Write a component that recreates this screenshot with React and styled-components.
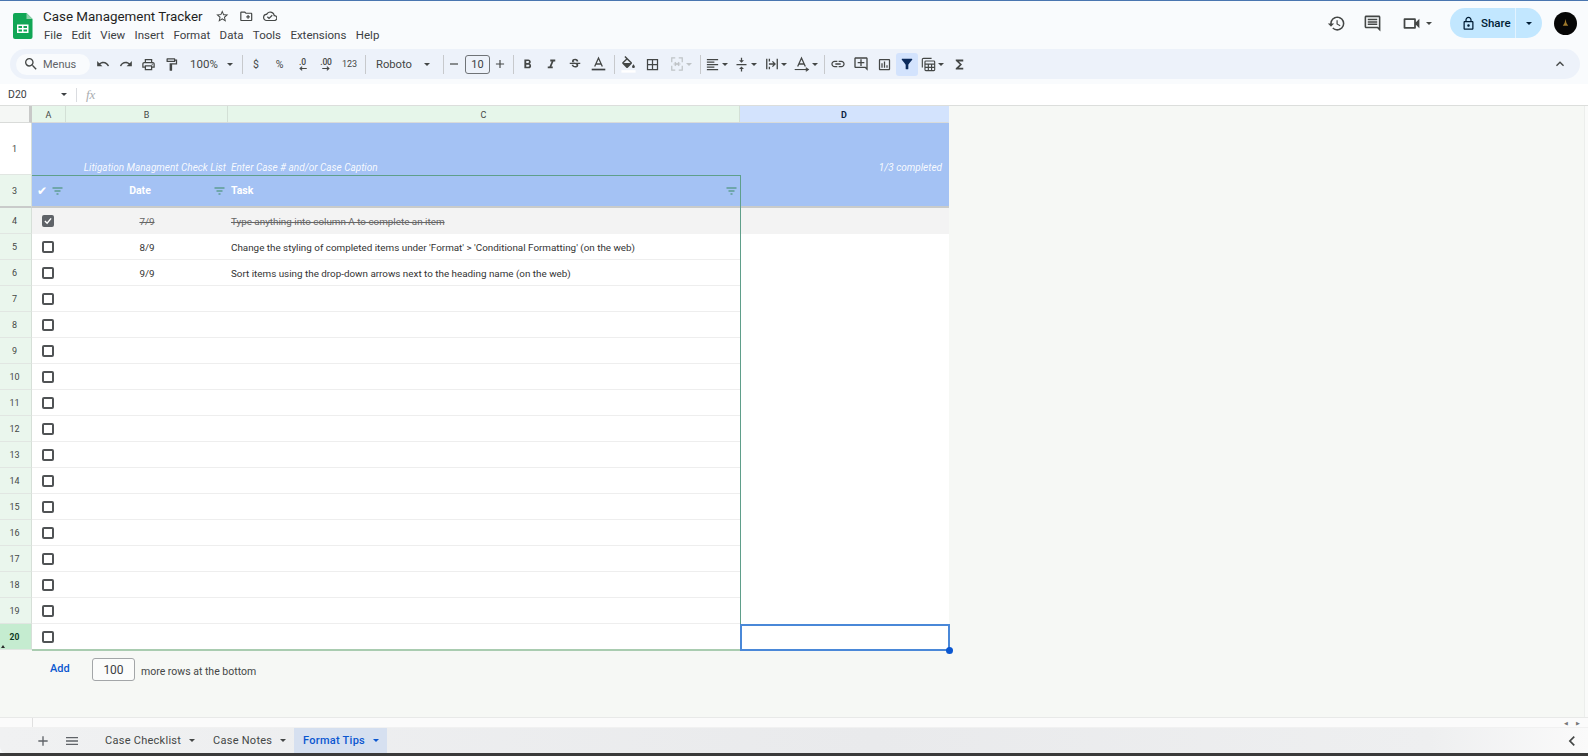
import React from "react";
import styled, { createGlobalStyle } from "styled-components";
import {
  MdSearch, MdUndo, MdRedo, MdOutlinePrint, MdOutlineFormatPaint, MdFormatBold, MdFormatItalic,
  MdStrikethroughS, MdBorderAll, MdFormatAlignLeft, MdVerticalAlignCenter,
  MdLink, MdOutlineAddComment, MdOutlineInsertChart, MdFilterAlt, MdFunctions, MdExpandLess,
  MdAdd, MdMenu, MdChevronLeft, MdOutlineStarBorder, MdOutlineCreateNewFolder, MdOutlineCloudDone,
  MdHistory, MdOutlineComment, MdOutlineVideocam, MdOutlineLock,
} from "react-icons/md";

const Global = createGlobalStyle`
  html, body { margin: 0; padding: 0; height: 100%; overflow: hidden; background: #f9fbfd; }
  body { font-family: Roboto, "Liberation Sans", sans-serif; color: #1f1f1f; }
  * { box-sizing: border-box; }
`;

const Page = styled.div`
  width: 1588px; height: 756px; display: flex; flex-direction: column; background: #f9fbfd;
  border-top: 1px solid #4a76b0;
`;
const TitleBar = styled.header`
  height: 48px; display: flex; align-items: flex-start; padding: 12px 11px 0 13px; flex: none;
`;
const LogoWrap = styled.div`width: 20px; height: 26px; flex: none; margin-right: 10px;`;
const DocInfo = styled.div`display: flex; flex-direction: column; margin-top: -6px;`;
const TitleRow = styled.div`display: flex; align-items: center; height: 19px;`;
const DocTitle = styled.div`font-size: 13.4px; line-height: 19px; color: #1f1f1f; width: 167px; white-space: nowrap;`;
const TitleIcon = styled.span`
  width: 24px; display: flex; justify-content: center; color: #444746; font-size: 14.5px;
`;
const MenuRow = styled.nav`display: flex; gap: 9.4px; margin-top: 1px; height: 16px; align-items: center; padding-left: 1px;`;
const MenuItem = styled.span`font-size: 11.5px; color: #3c4043;`;
const Actions = styled.div`margin-left: auto; display: flex; align-items: center; height: 30px; margin-top: -5px;`;
const ActionBtn = styled.span`
  width: ${(p) => p.$w}px; display: flex; align-items: center; justify-content: center; color: #444746; font-size: 19px; gap: 4px;
`;
const SharePill = styled.div`
  width: 92px; height: 30px; border-radius: 15px; background: #c2e7ff; display: flex; margin: 0 12px 0 8px; overflow: hidden;
`;
const ShareMain = styled.div`
  width: 66px; display: flex; align-items: center; gap: 5px; padding-left: 11px; font-size: 11.5px; font-weight: 500; color: #001d35;
  border-right: 1px solid #e3f3ff;
  svg { font-size: 15px; }
`;
const ShareCaret = styled.div`flex: 1; display: flex; align-items: center; justify-content: center; color: #001d35;`;
const Avatar = styled.div`width: 23px; height: 23px; border-radius: 50%; background: #060606; display: flex; align-items: center; justify-content: center;`;

const ToolbarWrap = styled.div`height: 35px; padding: 0 8px 5px 10px; flex: none;`;
const Toolbar = styled.div`
  height: 30px; border-radius: 15px; background: #edf2fa; display: flex; align-items: center; padding-left: 6px;
`;
const SearchPill = styled.div`
  width: 74px; height: 21px; border-radius: 11px; background: #f9fbfd; display: flex; align-items: center; gap: 4px; padding-left: 7px;
  font-size: 11px; color: #5f6368; margin-right: 1px; flex: none;
  svg { font-size: 16px; color: #444746; }
`;
const Slot = styled.div`
  width: ${(p) => p.$w}px; flex: none; height: 23px; display: flex; align-items: center; justify-content: center;
  color: ${(p) => (p.$muted ? "#bfc3c6" : p.$active ? "#0b2a5b" : "#444746")}; font-size: ${(p) => p.$size || 15}px;
  background: ${(p) => (p.$active ? "#d3e3fd" : "transparent")}; border-radius: 3px;
`;
const TextSlot = styled(Slot)`
  font-size: ${(p) => p.$size || 10}px; font-weight: ${(p) => p.$weight || 400}; justify-content: ${(p) => (p.$start ? "space-between" : "center")};
  padding: ${(p) => (p.$start ? "0 7px 0 7px" : "0")};
`;
const Sep = styled.div`
  width: ${(p) => p.$w || 6}px; flex: none; height: 19px; position: relative;
  &::after { content: ""; position: absolute; left: 50%; top: 0; bottom: 0; width: 1px; background: #c7c9cc; }
`;
const Caret = styled.i`
  display: inline-block; width: 0; height: 0; flex: none;
  border-left: 3px solid transparent; border-right: 3px solid transparent;
  border-top: 3.5px solid ${(p) => p.$color || "currentColor"};
`;
const CaretGap = styled.span`display: inline-flex; margin-left: 2px;`;
const SizeInput = styled.div`
  width: 25px; height: 19px; border: 1px solid #6f7377; border-radius: 3px; margin: 0 0 0 5px; flex: none;
  display: flex; align-items: center; justify-content: center; font-size: 11px; color: #3c4043;
`;
const DecText = styled.span`
  font-size: 8.5px; color: #444746; line-height: 8px; font-weight: 500; letter-spacing: -0.2px;
`;
const DecIcon = styled.span`display: flex; flex-direction: column; align-items: center; gap: 0; margin-top: 1px;`;
const CollapseBtn = styled.div`margin-left: auto; margin-right: 12px; display: flex; color: #444746; font-size: 16px;`;

const FormulaBar = styled.div`
  height: 22px; background: #fff; display: flex; align-items: center; border-bottom: 1px solid #dcdedc; flex: none; position: relative;
`;
const NameBox = styled.div`
  width: 76px; display: flex; align-items: center; justify-content: space-between; padding: 0 9px 0 8px; font-size: 10.5px; color: #3c4043;
`;
const FormulaSep = styled.div`width: 1px; height: 14px; background: #dadce0;`;
const Fx = styled.span`font-family: "Liberation Serif", serif; font-style: italic; font-size: 13px; color: #a9adb0; margin-left: 9px;`;

const SheetArea = styled.div`flex: 1; background: #f6f8f5; min-height: 0; position: relative;`;
const Grid = styled.div`
  width: 949px; position: relative; display: grid;
  grid-template-columns: 32px 34px 162px 512px 209px;
  grid-template-rows: 17px 52px 33px repeat(17, 26px);
`;
const Corner = styled.div`background: #f5f7f5; border-right: 3px solid #c8c9c8; border-bottom: 1px solid #d9dbd9;`;
const ColHead = styled.div`
  display: flex; align-items: center; justify-content: center; font-size: 9px; padding-top: 1px;
  background: ${(p) => (p.$selected ? "#d3e3fd" : "#e6f6ea")};
  color: ${(p) => (p.$selected ? "#0b1f45" : "#444746")}; font-weight: ${(p) => (p.$selected ? 700 : 400)};
  border-right: 1px solid ${(p) => (p.$selected ? "#d3e3fd" : "#d3e0d6")}; border-bottom: 1px solid #d9dbd9;
`;
const RowHead = styled.div`
  display: flex; align-items: center; justify-content: center; font-size: ${(p) => (p.$current ? 8.5 : 9)}px; padding-right: 2px; position: relative;
  background: ${(p) => (p.$current ? "#c5ecd0" : p.$white ? "#ffffff" : "#eaf6ed")};
  color: ${(p) => (p.$current ? "#0d3b23" : "#444746")}; font-weight: ${(p) => (p.$current ? 700 : 400)};
  border-right: 1px solid #d6dfd8; border-bottom: ${(p) => (p.$thick ? "2px solid #c9cbca" : "1px solid #e1e6e2")};
`;
const HiddenMark = styled.i`
  position: absolute; left: 1px; bottom: 1px; width: 0; height: 0;
  border-left: 2.5px solid transparent; border-right: 2.5px solid transparent; border-bottom: 3px solid #2c2c2c;
`;
const BannerCell = styled.div`
  background: #a4c2f4; color: rgba(255,255,255,.92); font-style: italic; font-size: 10px; display: flex; align-items: flex-end;
  padding: 0 ${(p) => (p.$endPad ?? 3)}px 2px 3px; white-space: nowrap;
  justify-content: ${(p) => (p.$right ? "flex-end" : "flex-start")};
  span { flex: none; }
`;
const HeadCell = styled.div`
  background: #a4c2f4; color: #fff; font-weight: 700; font-size: 10.5px; display: flex; align-items: center; position: relative;
  border-bottom: 2px solid #c9cbca; padding: 0 3px;
  justify-content: ${(p) => p.$justify || "flex-start"};
`;
const CheckGlyph = styled.span`font-size: 12px; position: relative; left: 2px; font-family: "DejaVu Sans", sans-serif;`;
const FilterMark = styled.span`
  position: absolute; right: ${(p) => p.$right}px; top: 50%; margin-top: -5px; display: flex;
`;
const HeadLabel = styled.span`position: relative; left: ${(p) => p.$left || 0}px;`;
const Cell = styled.div`
  background: ${(p) => (p.$done ? "#f3f3f3" : "#fff")};
  border-bottom: 1px solid ${(p) => (p.$done ? "#f3f3f3" : p.$plain ? "#fff" : "#eeeeee")};
  display: flex; align-items: center; font-size: 9.85px; color: ${(p) => (p.$done ? "#666" : "#333")};
  padding: 1px 3px 0; white-space: nowrap; overflow: hidden;
  justify-content: ${(p) => (p.$center ? "center" : "flex-start")};
  text-decoration: ${(p) => (p.$done ? "line-through" : "none")};
`;
const CheckCell = styled(Cell)`text-decoration: none;`;
const Check = styled.span`
  width: 12px; height: 12px; border-radius: 2px; border: 2px solid ${(p) => (p.$on ? "#5f6368" : "#505355")};
  background: ${(p) => (p.$on ? "#5f6368" : "#fff")}; display: flex; align-items: center; justify-content: center; margin-left: 7px;
`;
const FilterFrame = styled.div`
  position: absolute; left: 32px; top: 69px; width: 709px; height: 476px; pointer-events: none;
  border: 1px solid #5f9f8a; border-left: none; border-bottom: 2px solid #a9ccb0;
`;
const ActiveCell = styled.div`
  position: absolute; left: 740px; top: 518px; width: 210px; height: 27px; border: 2px solid #4a88d8; pointer-events: none;
`;
const Handle = styled.i`
  position: absolute; right: -5px; bottom: -5px; width: 7px; height: 7px; border-radius: 50%; background: #0b57d0;
`;
const AddRows = styled.div`display: flex; align-items: center; height: 23px; margin-top: 8px; padding-left: 50px;`;
const AddLink = styled.span`font-size: 11px; font-weight: 500; color: #0b57d0; width: 42px; position: relative; top: -1px;`;
const AddInput = styled.div`
  width: 43px; height: 23px; border: 1px solid #a3a6a8; border-radius: 3px; background: #fbfcfb;
  display: flex; align-items: center; justify-content: center; font-size: 12px; color: #3c4043; margin-right: 6px;
`;
const AddText = styled.span`font-size: 10.5px; color: #444746; position: relative; top: 1.500px;`;
const VScroll = styled.div`
  position: absolute; right: 0; top: 0; bottom: 0; width: 4px; background: #fafbfa; border-left: 1px solid #eceeec;
`;

const ScrollStrip = styled.div`
  height: 10px; flex: none; background: #fbfbfb; border-top: 1px solid #e8e9e8; display: flex; align-items: center; padding-left: 32px;
`;
const StripTick = styled.i`width: 1px; height: 9px; background: #e0e0e0;`;
const StripArrows = styled.span`margin-left: auto; display: flex; gap: 8px; padding-right: 8px; color: #777; font-size: 5px;`;
const TabBar = styled.div`
  height: 26px; flex: none; background: linear-gradient(90deg, #f0f1f2 0%, #e9eaec 55%, #eeeff0 90%, #fafafa 100%);
  border-top: 1px solid #f1f1f1; border-radius: 0 0 6px 6px; display: flex; align-items: center; padding-left: 34px; color: #444746;
`;
const TabIcon = styled.span`width: ${(p) => p.$w}px; display: flex; justify-content: center; font-size: 16px; color: #5f6368;`;
const Tab = styled.div`
  height: 26px; display: flex; align-items: center; flex: none; gap: 8px; width: ${(p) => p.$w}px;
  padding-left: ${(p) => p.$pad}px; font-size: 11px; letter-spacing: 0.27px;
  font-weight: ${(p) => (p.$active ? 500 : 400)}; color: ${(p) => (p.$active ? "#0b57d0" : "#444746")};
  background: ${(p) => (p.$active ? "#d6e0f0" : "transparent")};
`;
const EndBtn = styled.span`margin-left: auto; padding-right: 6px; display: flex; font-size: 20px; color: #444746;`;
const Desk = styled.div`height: 3px; flex: none; background: #3a3a3a;`;

const Logo = () => (
  <svg width="20" height="26" viewBox="0 0 20 26">
    <path d="M2 0h11.500L19.500 6v18a2 2 0 0 1-2 2H2a2 2 0 0 1-2-2V2a2 2 0 0 1 2-2z" fill="#11a655" />
    <path d="M13.500 0l6 6h-6z" fill="#8ed1a9" />
    <path d="M4 11.500h11.500v8.500H4z M5.500 13v2h3.500v-2z M10.500 13v2h3.500v-2z M5.500 16.500v2h3.500v-2z M10.500 16.500v2h3.500v-2z" fill="#fff" fillRule="evenodd" />
  </svg>
);
const FilterLines = ({ color = "#5d9d92" }) => (
  <svg width="11" height="10" viewBox="0 0 11 10" fill="none" stroke={color} strokeWidth="1.400">
    <path d="M0.500 2h10M2.500 5h6M4.500 8h2" />
  </svg>
);
const MergeIcon = () => (
  <svg width="14" height="14" viewBox="0 0 16 16" fill="none" stroke="currentColor" strokeWidth="1.400">
    <path d="M6 1H2v5M10 1h4v5M6 15H2v-5M10 15h4v-5M4 8h3M12 8H9M5.500 6L7.500 8l-2 2M10.500 6L8.500 8l2 2" />
  </svg>
);
const WrapIcon = () => (
  <svg width="14" height="14" viewBox="0 0 16 16" fill="none" stroke="currentColor" strokeWidth="1.500">
    <path d="M2 2v12M14 2v12M4.500 8h7M8.500 5l3 3-3 3M5 2v3M5 11v3" />
  </svg>
);
const TextColor = ({ rotated }) => (
  <svg width="17" height="16" viewBox="0 0 20 18" fill="none" stroke="currentColor">
    <path d="M5.500 12L10 2l4.500 10M7 9h6" strokeWidth="1.500" />
    <path d="M2 15.500h16" strokeWidth={rotated ? 1.300 : 2} stroke={rotated ? "currentColor" : "#3c4043"} />
    {rotated && <path d="M15 13.500l3 2-3 2" strokeWidth="1.300" />}
  </svg>
);
const FillIcon = () => (
  <svg width="17" height="17" viewBox="0 0 24 24">
    <path d="M16.560 8.940L7.620 0 6.210 1.410l2.380 2.380-5.150 5.150c-.59.59-.59 1.540 0 2.120l5.500 5.500c.29.29.68.44 1.060.44s.77-.15 1.060-.44l5.500-5.500c.59-.58.59-1.530 0-2.120zM5.210 10L10 5.210 14.790 10H5.210zM19 11.500s-2 2.170-2 3.500c0 1.100.9 2 2 2s2-.9 2-2c0-1.330-2-3.500-2-3.500z" fill="currentColor" />
    <path d="M2 20h20v3.500H2z" fill="#fff" />
  </svg>
);
const ViewsIcon = () => (
  <svg width="15" height="15" viewBox="0 0 17 17" fill="none" stroke="currentColor" strokeWidth="1.300">
    <path d="M1.500 12V3a1.500 1.500 0 0 1 1.500-1.500h9" />
    <rect x="4.500" y="4.500" width="11" height="11" rx="1" />
    <path d="M4.500 8h11M4.500 11.700h11M8.300 8v7.500M12 8v7.500" />
  </svg>
);
const DecArrow = ({ left }) => (
  <svg width="10" height="5" viewBox="0 0 11 6" fill="none" stroke="#444746" strokeWidth="1.300">
    {left ? <path d="M10 3H2M4.500 0.800L2 3l2.500 2.200" /> : <path d="M1 3h8M6.500 0.800L9 3 6.500 5.200" />}
  </svg>
);
const MiniCheck = () => (
  <svg width="9" height="8" viewBox="0 0 9 8" fill="none" stroke="#fff" strokeWidth="1.600"><path d="M1 4l2.500 2.500L8 1" /></svg>
);

const menus = ["File", "Edit", "View", "Insert", "Format", "Data", "Tools", "Extensions", "Help"];
const rowData = {
  4: { date: "7/9", task: "Type anything into column A to complete an item", done: true },
  5: { date: "8/9", task: "Change the styling of completed items under 'Format' > 'Conditional Formatting' (on the web)" },
  6: { date: "9/9", task: "Sort items using the drop-down arrows next to the heading name (on the web)" },
};
const rowNums = Array.from({ length: 17 }, (_, i) => i + 4);

export default function App() {
  return (
    <Page>
      <Global />
      <TitleBar>
        <LogoWrap><Logo /></LogoWrap>
        <DocInfo>
          <TitleRow>
            <DocTitle>Case Management Tracker</DocTitle>
            <TitleIcon><MdOutlineStarBorder /></TitleIcon>
            <TitleIcon><MdOutlineCreateNewFolder /></TitleIcon>
            <TitleIcon><MdOutlineCloudDone /></TitleIcon>
          </TitleRow>
          <MenuRow>{menus.map((m) => <MenuItem key={m}>{m}</MenuItem>)}</MenuRow>
        </DocInfo>
        <Actions>
          <ActionBtn $w={36}><MdHistory /></ActionBtn>
          <ActionBtn $w={36}><MdOutlineComment /></ActionBtn>
          <ActionBtn $w={52}><MdOutlineVideocam style={{ fontSize: 21 }} /><Caret /></ActionBtn>
          <SharePill>
            <ShareMain><MdOutlineLock />Share</ShareMain>
            <ShareCaret><Caret /></ShareCaret>
          </SharePill>
          <Avatar>
            <svg width="7" height="8" viewBox="0 0 9 10"><path d="M4.500 0l1.200 5 2.300 3.500H1L3.300 5z" fill="#a07a2c" /></svg>
          </Avatar>
        </Actions>
      </TitleBar>

      <ToolbarWrap>
        <Toolbar>
          <SearchPill><MdSearch />Menus</SearchPill>
          <Slot $w={23} $size={14}><MdUndo /></Slot>
          <Slot $w={23} $size={14}><MdRedo /></Slot>
          <Slot $w={23} $size={15}><MdOutlinePrint /></Slot>
          <Slot $w={23} $size={15}><MdOutlineFormatPaint /></Slot>
          <TextSlot $w={57} $size={11.500} $start>100%<Caret /></TextSlot>
          <Sep $w={4} />
          <TextSlot $w={24} $size={10.500}>$</TextSlot>
          <TextSlot $w={23} $size={10.500}>%</TextSlot>
          <TextSlot $w={23}><DecIcon><DecText>.0</DecText><DecArrow left /></DecIcon></TextSlot>
          <TextSlot $w={24}><DecIcon><DecText>.00</DecText><DecArrow /></DecIcon></TextSlot>
          <TextSlot $w={23} $size={9}>123</TextSlot>
          <Sep $w={8} />
          <TextSlot $w={68} $size={11.200} $start>Roboto<Caret /></TextSlot>
          <Sep $w={11} />
          <Slot $w={12}><svg width="8" height="2" viewBox="0 0 8 2"><path d="M0 1h8" stroke="currentColor" strokeWidth="1.200" /></svg></Slot>
          <SizeInput>10</SizeInput>
          <Slot $w={20} $size={14}><MdAdd /></Slot>
          <Sep />
          <Slot $w={23.500} $size={15}><MdFormatBold /></Slot>
          <Slot $w={23} $size={15}><MdFormatItalic /></Slot>
          <Slot $w={24} $size={14}><MdStrikethroughS /></Slot>
          <Slot $w={24}><TextColor /></Slot>
          <Sep />
          <Slot $w={23}><FillIcon /></Slot>
          <Slot $w={25} $size={15}><MdBorderAll /></Slot>
          <Slot $w={32} $muted><MergeIcon /><CaretGap><Caret /></CaretGap></Slot>
          <Sep />
          <Slot $w={28} $size={15}><MdFormatAlignLeft /><CaretGap><Caret /></CaretGap></Slot>
          <Slot $w={30} $size={15}><MdVerticalAlignCenter /><CaretGap><Caret /></CaretGap></Slot>
          <Slot $w={30}><WrapIcon /><CaretGap><Caret /></CaretGap></Slot>
          <Slot $w={30}><TextColor rotated /><CaretGap><Caret /></CaretGap></Slot>
          <Sep />
          <Slot $w={23} $size={16}><MdLink /></Slot>
          <Slot $w={23} $size={16}><MdOutlineAddComment /></Slot>
          <Slot $w={23} $size={15}><MdOutlineInsertChart /></Slot>
          <Slot $w={22} $size={16} $active><MdFilterAlt /></Slot>
          <Slot $w={30}><ViewsIcon /><CaretGap><Caret /></CaretGap></Slot>
          <Slot $w={24} $size={15}><MdFunctions /></Slot>
          <CollapseBtn><MdExpandLess /></CollapseBtn>
        </Toolbar>
      </ToolbarWrap>

      <FormulaBar>
        <NameBox>D20<Caret /></NameBox>
        <FormulaSep />
        <Fx>fx</Fx>
      </FormulaBar>

      <SheetArea>
        <Grid>
          <Corner />
          <ColHead>A</ColHead>
          <ColHead>B</ColHead>
          <ColHead>C</ColHead>
          <ColHead $selected>D</ColHead>

          <RowHead $white>1</RowHead>
          <BannerCell />
          <BannerCell $right $endPad={2}><span>Litigation Managment Check List</span></BannerCell>
          <BannerCell><span>Enter Case # and/or Case Caption</span></BannerCell>
          <BannerCell $right $endPad={7}><span>1/3 completed</span></BannerCell>

          <RowHead $thick>3</RowHead>
          <HeadCell>
            <CheckGlyph>✔</CheckGlyph>
            <FilterMark $right={3}><FilterLines /></FilterMark>
          </HeadCell>
          <HeadCell $justify="center">
            <HeadLabel $left={-7}>Date</HeadLabel>
            <FilterMark $right={3}><FilterLines /></FilterMark>
          </HeadCell>
          <HeadCell>
            <HeadLabel>Task</HeadLabel>
            <FilterMark $right={3}><FilterLines /></FilterMark>
          </HeadCell>
          <HeadCell />

          {rowNums.map((n) => {
            const r = rowData[n] || {};
            return (
              <React.Fragment key={n}>
                <RowHead $current={n === 20}>{n}{n === 20 && <HiddenMark />}</RowHead>
                <CheckCell $done={r.done}>
                  <Check $on={r.done}>{r.done && <MiniCheck />}</Check>
                </CheckCell>
                <Cell $center $done={r.done}>{r.date}</Cell>
                <Cell $done={r.done}>{r.task}</Cell>
                <Cell $plain $done={r.done} />
              </React.Fragment>
            );
          })}
          <FilterFrame />
          <ActiveCell><Handle /></ActiveCell>
        </Grid>
        <AddRows>
          <AddLink>Add</AddLink>
          <AddInput>100</AddInput>
          <AddText>more rows at the bottom</AddText>
        </AddRows>
        <VScroll />
      </SheetArea>

      <ScrollStrip>
        <StripTick />
        <StripArrows><span>◀</span><span>▶</span></StripArrows>
      </ScrollStrip>

      <TabBar>
        <TabIcon $w={18}><MdAdd /></TabIcon>
        <TabIcon $w={40}><MdMenu /></TabIcon>
        <Tab $w={111} $pad={13}>Case Checklist<Caret /></Tab>
        <Tab $w={91} $pad={10}>Case Notes<Caret /></Tab>
        <Tab $w={93} $pad={9} $active>Format Tips<Caret /></Tab>
        <EndBtn><MdChevronLeft /></EndBtn>
      </TabBar>
      <Desk />
    </Page>
  );
}
